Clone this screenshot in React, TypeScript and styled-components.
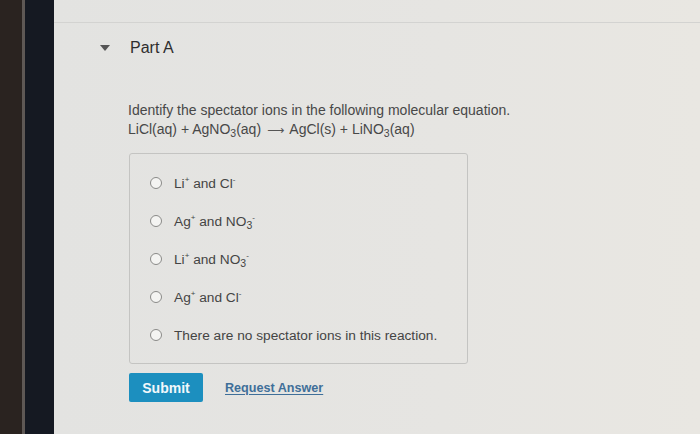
import React from "react";
import styled, { createGlobalStyle } from "styled-components";

const Global = createGlobalStyle`
  html, body { margin: 0; padding: 0; }
  body { width: 700px; height: 434px; overflow: hidden; font-family: "Liberation Sans", Arial, sans-serif; }
`;

const Frame = styled.div`
  display: flex;
  width: 700px;
  height: 434px;
`;

const Bezel = styled.div<{ $w: number; $c: string }>`
  width: ${(p) => p.$w}px;
  flex: none;
  background: ${(p) => p.$c};
`;

const Page = styled.div`
  flex: 1;
  display: flex;
  flex-direction: column;
  background: linear-gradient(90deg, #e3e3e1 0%, #e6e5e2 60%, #e9e7e2 100%);
`;

const TopRule = styled.div`
  height: 22px;
  border-bottom: 1px solid #d3d3d1;
  flex: none;
`;

const Content = styled.div`
  padding: 16px 0 0 46px;
  display: flex;
  flex-direction: column;
`;

const Header = styled.div`
  display: flex;
  align-items: center;
  gap: 20px;
  height: 18px;
`;

const Caret = styled.div`
  width: 0;
  height: 0;
  border-left: 5px solid transparent;
  border-right: 5px solid transparent;
  border-top: 6px solid #555;
`;

const Title = styled.div`
  font-size: 16px;
  color: #2e2e2e;
`;

const Question = styled.div`
  margin: 44px 0 0 28px;
  font-size: 14px;
  line-height: 19px;
  color: #484848;
`;

const Arrow = styled.span`
  font-family: "DejaVu Sans", sans-serif;
  font-size: 12px;
  color: #555;
  margin: 0 2px;
`;

const Box = styled.div`
  margin: 13px 0 0 29px;
  width: 339px;
  height: 211px;
  box-sizing: border-box;
  border: 1px solid #c4c4c2;
  border-radius: 3px;
  padding: 19px 0 0 20px;
  display: flex;
  flex-direction: column;
  gap: 18px;
`;

const Option = styled.label`
  display: flex;
  align-items: center;
  gap: 12px;
  height: 20px;
  font-size: 13.7px;
  color: #444;
`;

const Radio = styled.span`
  width: 10px;
  height: 10px;
  border-radius: 50%;
  border: 1px solid #8a8a88;
  background: #f4f4f2;
  flex: none;
`;

const Sup = styled.sup`
  font-size: 8px;
  vertical-align: 6px;
  line-height: 0;
`;

const Sub = styled.sub`
  font-size: 10.5px;
  vertical-align: -3px;
  line-height: 0;
`;

const Actions = styled.div`
  margin: 9px 0 0 29px;
  display: flex;
  align-items: center;
  gap: 22px;
`;

const Submit = styled.button`
  width: 74px;
  height: 29px;
  border: none;
  border-radius: 2px;
  background: #1c8fbf;
  color: #f2f8fb;
  font-family: "Liberation Sans", Arial, sans-serif;
  font-weight: bold;
  font-size: 14px;
  padding: 0;
`;

const Link = styled.a`
  font-size: 12.6px;
  font-weight: bold;
  color: #3f6f99;
  text-decoration: underline;
  text-underline-offset: 2px;
`;

const options: React.ReactNode[] = [
  <>Li<Sup>+</Sup> and Cl<Sup>-</Sup></>,
  <>Ag<Sup>+</Sup> and NO<Sub>3</Sub><Sup>-</Sup></>,
  <>Li<Sup>+</Sup> and NO<Sub>3</Sub><Sup>-</Sup></>,
  <>Ag<Sup>+</Sup> and Cl<Sup>-</Sup></>,
  <>There are no spectator ions in this reaction.</>,
];

export default function App() {
  return (
    <Frame>
      <Global />
      <Bezel $w={22} $c="#2a2320" />
      <Bezel $w={3} $c="#5e5855" />
      <Bezel $w={29} $c="#151922" />
      <Page>
        <TopRule />
        <Content>
          <Header>
            <Caret />
            <Title>Part A</Title>
          </Header>
          <Question>
            Identify the spectator ions in the following molecular equation.
            <br />
            LiCl(aq) + AgNO<Sub>3</Sub>(aq) <Arrow>⟶</Arrow> AgCl(s) + LiNO<Sub>3</Sub>(aq)
          </Question>
          <Box>
            {options.map((o, i) => (
              <Option key={i}>
                <Radio />
                <span>{o}</span>
              </Option>
            ))}
          </Box>
          <Actions>
            <Submit>Submit</Submit>
            <Link>Request Answer</Link>
          </Actions>
        </Content>
      </Page>
    </Frame>
  );
}
